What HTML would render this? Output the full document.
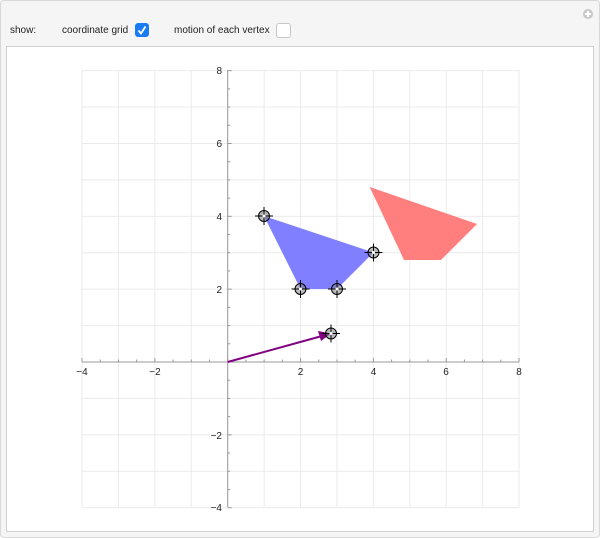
<!DOCTYPE html>
<html><head><meta charset="utf-8"><style>
body{margin:0;background:#fff;font-family:"Liberation Sans",sans-serif;}
.outer{position:absolute;left:0;top:0;width:598px;height:536px;background:#f5f5f5;border:1px solid #d8d8d8;border-radius:4px;}
.lbl{position:absolute;font-size:10px;color:#222;top:25px;}
.cb{position:absolute;top:23px;width:14px;height:14px;border-radius:3px;}
.panel{position:absolute;left:6px;top:46px;width:586px;height:484px;background:#fff;border:1px solid #d0d0d0;}
</style></head><body>
<div class="outer"></div>
<div style="position:absolute;left:583px;top:9px;width:10px;height:10px;border-radius:50%;background:#c8c8c8;"></div>
<div style="position:absolute;left:587px;top:11px;width:2px;height:6px;background:#fff"></div>
<div style="position:absolute;left:585px;top:13px;width:6px;height:2px;background:#fff"></div>
<div class="lbl" style="left:10px">show:</div>
<div class="lbl" style="left:62px">coordinate grid</div>
<div class="cb" style="left:135px;background:#1a7cf5;"><svg width="14" height="14"><path d="M3.5 7.5 L6 10.5 L10.5 3.5" stroke="#fff" stroke-width="1.8" fill="none"/></svg></div>
<div class="lbl" style="left:174px">motion of each vertex</div>
<div class="cb" style="left:276px;background:#fff;border:1px solid #c8c8c8;width:13px;height:13px"></div>
<div class="panel"></div>
<svg width="600" height="538" style="position:absolute;left:0;top:0">
<g id="grid" stroke="#ebebeb" stroke-width="1"></g>
<g id="ax" stroke="#999" stroke-width="1"></g>
<g font-size="10" fill="#222" font-family="Liberation Sans">
<text x="82" y="375" text-anchor="middle">−4</text>
<text x="155" y="375" text-anchor="middle">−2</text>
<text x="300.5" y="375" text-anchor="middle">2</text>
<text x="373.5" y="375" text-anchor="middle">4</text>
<text x="446" y="375" text-anchor="middle">6</text>
<text x="519" y="375" text-anchor="middle">8</text>
<text x="222" y="74" text-anchor="end">8</text>
<text x="222" y="147" text-anchor="end">6</text>
<text x="222" y="220" text-anchor="end">4</text>
<text x="222" y="293" text-anchor="end">2</text>
<text x="222" y="439" text-anchor="end">−2</text>
<text x="222" y="511" text-anchor="end">−4</text>
</g>
<polygon points="369.7,187 477,224 441,260 404,260" fill="#ff7f7f"/>
<polygon points="264,216 373.5,252.5 337,289 300.5,289" fill="#7f7fff"/>
<line x1="227.7" y1="362" x2="322" y2="336" stroke="#800080" stroke-width="2"/>
<polygon points="331,333.5 318,331 321,341" fill="#800080"/>
<g id="loc"></g>
</svg>
<script>
var g=document.getElementById('grid'),a=document.getElementById('ax'),l=document.getElementById('loc');
function X(v){return 227.7+v*36.42}function Y(v){return 362-v*36.42}
var s='';
for(var i=-4;i<=8;i++){s+='<line x1="'+X(i)+'" y1="70" x2="'+X(i)+'" y2="507"/>';s+='<line x1="82" y1="'+Y(i)+'" x2="519" y2="'+Y(i)+'"/>';}
g.innerHTML=s;s='<line x1="82" y1="362" x2="519" y2="362"/><line x1="227.7" y1="70" x2="227.7" y2="507"/>';
for(var i=-8;i<=16;i++){var v=i/2,L=(i%4==0)?4:2.5;s+='<line x1="'+X(v)+'" y1="362" x2="'+X(v)+'" y2="'+(362-L)+'"/>';s+='<line x1="227.7" y1="'+Y(v)+'" x2="'+(227.7+L)+'" y2="'+Y(v)+'"/>';}
a.innerHTML=s;s='';
[[264,216],[373.5,252.5],[337,289],[300.5,289],[331,333.5]].forEach(function(p){
s+='<circle cx="'+p[0]+'" cy="'+p[1]+'" r="5.5" fill="rgba(130,130,130,0.55)" stroke="#000" stroke-width="1"/>';
s+='<path d="M'+(p[0]-9)+' '+p[1]+'H'+(p[0]+9)+'M'+p[0]+' '+(p[1]-9)+'V'+(p[1]+9)+'" stroke="#000" stroke-width="1"/>';
s+='<circle cx="'+p[0]+'" cy="'+p[1]+'" r="1.5" fill="#fff"/>';});
l.innerHTML=s;
</script>
</body></html>
